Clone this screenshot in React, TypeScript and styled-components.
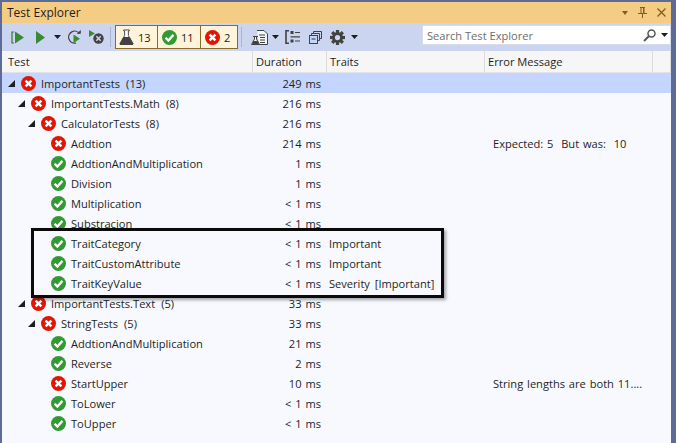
import React from "react";
import styled, { createGlobalStyle } from "styled-components";

type Status = "pass" | "fail";

interface TestRow {
  name: string;
  count?: number;
  level: number;
  status: Status;
  group?: boolean;
  duration: string;
  traits?: string;
  error?: string;
  selected?: boolean;
}

const rows: TestRow[] = [
  { name: "ImportantTests", count: 13, level: 0, status: "fail", group: true, duration: "249 ms", selected: true },
  { name: "ImportantTests.Math", count: 8, level: 1, status: "fail", group: true, duration: "216 ms" },
  { name: "CalculatorTests", count: 8, level: 2, status: "fail", group: true, duration: "216 ms" },
  { name: "Addtion", level: 3, status: "fail", duration: "214 ms", error: "Expected: 5  But was:  10" },
  { name: "AddtionAndMultiplication", level: 3, status: "pass", duration: "1 ms" },
  { name: "Division", level: 3, status: "pass", duration: "1 ms" },
  { name: "Multiplication", level: 3, status: "pass", duration: "< 1 ms" },
  { name: "Substracion", level: 3, status: "pass", duration: "< 1 ms" },
  { name: "TraitCategory", level: 3, status: "pass", duration: "< 1 ms", traits: "Important" },
  { name: "TraitCustomAttribute", level: 3, status: "pass", duration: "< 1 ms", traits: "Important" },
  { name: "TraitKeyValue", level: 3, status: "pass", duration: "< 1 ms", traits: "Severity [Important]" },
  { name: "ImportantTests.Text", count: 5, level: 1, status: "fail", group: true, duration: "33 ms" },
  { name: "StringTests", count: 5, level: 2, status: "fail", group: true, duration: "33 ms" },
  { name: "AddtionAndMultiplication", level: 3, status: "pass", duration: "21 ms" },
  { name: "Reverse", level: 3, status: "pass", duration: "2 ms" },
  { name: "StartUpper", level: 3, status: "fail", duration: "10 ms", error: "String lengths are both 11...." },
  { name: "ToLower", level: 3, status: "pass", duration: "< 1 ms" },
  { name: "ToUpper", level: 3, status: "pass", duration: "< 1 ms" },
];

const FailIcon = ({ size = 15 }: { size?: number }) => (
  <svg width={size} height={size} viewBox="0 0 16 16">
    <circle cx="8" cy="8" r="8" fill="#e51400" />
    <path d="M4.9 4.9l6.2 6.2M11.1 4.9l-6.2 6.2" stroke="#fff" strokeWidth="2.6" />
  </svg>
);

const PassIcon = ({ size = 15 }: { size?: number }) => (
  <svg width={size} height={size} viewBox="0 0 16 16">
    <circle cx="8" cy="8" r="8" fill="#339933" />
    <path d="M3.8 8.2l3 3 5.4-6" fill="none" stroke="#fff" strokeWidth="2.4" />
  </svg>
);

const FlaskIcon = () => (
  <FlaskSvg width="15" height="16" viewBox="0 0 16 17">
    <path d="M5 1h6v1h-1v5l5 8.500v.500H1v-.500L6 7V2H5z" fill="#fff" stroke="#424242" strokeWidth="1" />
    <path d="M4.600 8.500h6.800L15 15.600V17H1v-1.400z" fill="#424242" />
  </FlaskSvg>
);

const Caret = () => (
  <svg width="7" height="4" viewBox="0 0 7 4">
    <path d="M0 0h7L3.500 4z" fill="#1e1e1e" />
  </svg>
);

const Expander = () => (
  <svg width="7" height="7" viewBox="0 0 7 7">
    <path d="M7 0v7H0z" fill="#1e1e1e" />
  </svg>
);

const RunAllIcon = () => (
  <svg width="13" height="13" viewBox="0 0 13 13">
    <path d="M3 1H1v11h2" fill="none" stroke="#2f7d32" strokeWidth="1.200" />
    <path d="M4 .500l9 6-9 6z" fill="#388a34" />
  </svg>
);

const RunIcon = () => (
  <svg width="9" height="13" viewBox="0 0 9 13">
    <path d="M0 0l9 6.500L0 13z" fill="#388a34" />
  </svg>
);

const RepeatIcon = () => (
  <svg width="15" height="14" viewBox="0 0 15 14">
    <path d="M12.500 3.600A6 6 0 1 0 9 13" fill="none" stroke="#424242" strokeWidth="1.200" />
    <path d="M9.500 3.800h4.300V0z" fill="#424242" />
    <path d="M6.500 4.500l6.500 4.200-6.500 4.300z" fill="#388a34" />
  </svg>
);

const CancelIcon = () => (
  <svg width="15" height="14" viewBox="0 0 15 14">
    <path d="M0 0l6 3.500L0 7z" fill="#388a34" />
    <circle cx="9.500" cy="8.500" r="5.200" fill="#424242" />
    <path d="M7.300 6.300l4.400 4.400M11.700 6.300l-4.400 4.400" stroke="#ccd5f0" strokeWidth="1.500" />
  </svg>
);

const PlaylistIcon = () => (
  <svg width="17" height="15" viewBox="0 0 17 15">
    <path d="M6 .500h7l3.500 3.500v10.500H8" fill="#f4f5fa" stroke="#424242" />
    <path d="M8 5h6M9 7.500h5M9 10h5M9 12.500h5" stroke="#424242" />
    <path d="M2 6.500h5M3.500 6.500v2.500L.500 14.500h8L5.500 9V6.500" fill="#f4f5fa" stroke="#424242" />
    <path d="M2.300 11h4.400l1.400 3.500h-7z" fill="#424242" />
  </svg>
);

const HierarchyIcon = () => (
  <svg width="15" height="14" viewBox="0 0 15 14">
    <path d="M4 .800H1v12.400h3" fill="none" stroke="#424242" strokeWidth="1.600" />
    <path d="M5.500 1h3v3h-3zM5.500 9.500h3v3h-3z" fill="#424242" />
    <path d="M10 2.500h5M10 11h5M5.500 6.800H15" stroke="#424242" strokeWidth="1.200" />
  </svg>
);

const CopyIcon = () => (
  <svg width="13" height="13" viewBox="0 0 13 13">
    <path d="M4.500 2.500v-2h8v7h-2" fill="none" stroke="#424242" />
    <path d="M2.500 4.500v-2h8v7h-2" fill="none" stroke="#424242" />
    <rect x=".500" y="4.500" width="8" height="8" fill="#ccd5f0" stroke="#424242" />
    <path d="M2.500 8h4" stroke="#1c6fb8" strokeWidth="1.400" />
  </svg>
);

const gearTeeth = [0, 45, 90, 135, 180, 225, 270, 315];

const GearIcon = () => (
  <svg width="15" height="15" viewBox="0 0 16 16">
    <circle cx="8" cy="8" r="4.300" fill="none" stroke="#424242" strokeWidth="3" />
    {gearTeeth.map((angle) => (
      <rect key={angle} x="6.300" y="0" width="3.400" height="3.500" fill="#424242" transform={`rotate(${angle} 8 8)`} />
    ))}
  </svg>
);

const SearchIcon = () => (
  <svg width="13" height="13" viewBox="0 0 13 13">
    <circle cx="8.500" cy="4.500" r="3.500" fill="none" stroke="#555" strokeWidth="1.500" />
    <path d="M6 7l-5 5" stroke="#555" strokeWidth="2" />
  </svg>
);

const PinIcon = () => (
  <svg width="9" height="11" viewBox="0 0 9 11">
    <path d="M2 .500h5M3 .500v6M6 .500v6M0 6.500h9M4.500 6.500V11" stroke="#7a5f24" fill="none" />
    <path d="M5 1h1v5H5z" fill="#7a5f24" />
  </svg>
);

const CloseIcon = () => (
  <svg width="9" height="9" viewBox="0 0 9 9">
    <path d="M.500.500l8 8M8.500.500l-8 8" stroke="#7a5f24" strokeWidth="1.300" />
  </svg>
);

export default function App() {
  return (
    <>
      <GlobalStyle />
      <Window>
        <TitleBar>
          <TitleText>Test Explorer</TitleText>
          <TitleActions>
            <TitleCaret />
            <PinIcon />
            <CloseIcon />
          </TitleActions>
        </TitleBar>
        <Toolbar>
          <ToolSlot $gap={1}><RunAllIcon /></ToolSlot>
          <ToolSlot $gap={12}><RunIcon /></ToolSlot>
          <ToolSlot $gap={9}><Caret /></ToolSlot>
          <ToolSlot $gap={6}><RepeatIcon /></ToolSlot>
          <ToolSlot $gap={7}><CancelIcon /></ToolSlot>
          <Separator $before={6} />
          <FilterGroup>
            <FilterButton $width={43}><FlaskIcon /> 13</FilterButton>
            <FilterButton $width={44}><PassIcon /> 11</FilterButton>
            <FilterButton $width={38}><FailIcon /> 2</FilterButton>
          </FilterGroup>
          <Separator $before={4} />
          <ToolSlot $gap={5}><PlaylistIcon /></ToolSlot>
          <ToolSlot $gap={4}><Caret /></ToolSlot>
          <ToolSlot $gap={6}><HierarchyIcon /></ToolSlot>
          <ToolSlot $gap={9}><CopyIcon /></ToolSlot>
          <ToolSlot $gap={8}><GearIcon /></ToolSlot>
          <ToolSlot $gap={6}><Caret /></ToolSlot>
          <SearchBox>
            <SearchPlaceholder>Search Test Explorer</SearchPlaceholder>
            <SearchIcon />
            <Caret />
          </SearchBox>
        </Toolbar>
        <HeaderRow>
          <HeaderCell $first>Test</HeaderCell>
          <HeaderCell>Duration</HeaderCell>
          <HeaderCell>Traits</HeaderCell>
          <HeaderCell>Error Message</HeaderCell>
          <HeaderCell />
        </HeaderRow>
        <TreeBody>
          {rows.map((row, index) => (
            <Row key={index} $selected={row.selected}>
              <NameCell $level={row.level}>
                <ExpanderSlot>{row.group && <Expander />}</ExpanderSlot>
                {row.status === "fail" ? <FailIcon /> : <PassIcon />}
                <Name>{row.name}</Name>
                {row.count !== undefined && <Count>({row.count})</Count>}
              </NameCell>
              <DurationCell>{row.duration}</DurationCell>
              <TraitsCell>{row.traits}</TraitsCell>
              <ErrorCell>{row.error}</ErrorCell>
            </Row>
          ))}
          <Highlight />
        </TreeBody>
      </Window>
    </>
  );
}

const GlobalStyle = createGlobalStyle`
  html, body {
    margin: 0;
    padding: 0;
    background: #5d6b99;
  }
  body {
    font-family: "Open Sans", "Liberation Sans", sans-serif;
    font-size: 11.1px;
    color: #1e1e1e;
  }
`;

const Window = styled.div`
  width: 676px;
  height: 443px;
  box-sizing: border-box;
  padding: 2px 5px 0 2px;
  overflow: hidden;
  display: flex;
  flex-direction: column;
`;

const TitleBar = styled.div`
  height: 21px;
  flex: none;
  background: #f5cc84;
  display: flex;
  align-items: center;
  justify-content: space-between;
  padding: 0 5px 0 5px;
`;

const TitleText = styled.span`
  font-size: 12px;
  color: #1e1e1e;
`;

const TitleActions = styled.div`
  display: flex;
  align-items: center;
  gap: 10px;
`;

const TitleCaret = styled.span`
  width: 0;
  height: 0;
  border-left: 3.5px solid transparent;
  border-right: 3.5px solid transparent;
  border-top: 4px solid #7a5f24;
`;

const Toolbar = styled.div`
  height: 28px;
  flex: none;
  background: #ccd5f0;
  display: flex;
  align-items: center;
  padding-left: 8px;
  box-sizing: border-box;
`;

const ToolSlot = styled.span<{ $gap: number }>`
  display: flex;
  align-items: center;
  margin-left: ${({ $gap }) => $gap}px;
`;

const Separator = styled.span<{ $before: number }>`
  width: 1px;
  height: 20px;
  background: #a9b3d4;
  margin: 0 4px 0 ${({ $before }) => $before}px;
`;

const FilterGroup = styled.div`
  display: flex;
  height: 24px;
`;

const FilterButton = styled.div<{ $width: number }>`
  width: ${({ $width }) => $width}px;
  box-sizing: border-box;
  background: #fdf4d9;
  border: 1px solid #8a6a24;
  margin-right: -1px;
  display: flex;
  align-items: center;
  gap: 4px;
  padding-left: 4px;
`;

const FlaskSvg = styled.svg`
  margin-left: -1px;
`;

const SearchBox = styled.div`
  margin: 2px 0 0 auto;
  align-self: flex-start;
  width: 249px;
  height: 20px;
  box-sizing: border-box;
  background: #fff;
  border: 1px solid #d6dcee;
  display: flex;
  align-items: center;
  gap: 5px;
  padding: 0 2px 0 4px;
`;

const SearchPlaceholder = styled.span`
  flex: 1;
  color: #6d6d6d;
`;

const gridColumns = "251px 74px 158px 168px 1fr";

const HeaderRow = styled.div`
  height: 22px;
  flex: none;
  background: #f6f6f6;
  border-bottom: 1px solid #e2e2e6;
  box-sizing: border-box;
  display: grid;
  grid-template-columns: ${gridColumns};
`;

const HeaderCell = styled.div<{ $first?: boolean }>`
  border-right: 1px solid #dcdcdc;
  padding-left: ${({ $first }) => ($first ? 6 : 3)}px;
  display: flex;
  align-items: center;
`;

const TreeBody = styled.div`
  flex: 1;
  background: #f7f9fe;
  position: relative;
`;

const Row = styled.div<{ $selected?: boolean }>`
  height: 20px;
  display: grid;
  grid-template-columns: ${gridColumns};
  align-items: center;
  background: ${({ $selected }) => ($selected ? "#c4d5ff" : "transparent")};
`;

const NameCell = styled.div<{ $level: number }>`
  display: flex;
  align-items: center;
  padding-left: ${({ $level }) => 6 + $level * 10}px;
  white-space: nowrap;
`;

const ExpanderSlot = styled.span`
  width: 13px;
  height: 20px;
  flex: none;
  display: flex;
  align-items: center;
`;

const Name = styled.span`
  margin-left: 5px;
`;

const Count = styled.span`
  margin-left: 6px;
`;

const DurationCell = styled.div`
  text-align: right;
  padding-right: 6px;
  white-space: nowrap;
  word-spacing: 1px;
`;

const TraitsCell = styled.div`
  padding-left: 2px;
  white-space: nowrap;
  word-spacing: 2px;
`;

const ErrorCell = styled.div`
  padding-left: 8px;
  white-space: pre;
  word-spacing: 1px;
`;

const Highlight = styled.div`
  position: absolute;
  left: 29px;
  top: 155px;
  width: 413px;
  height: 70px;
  box-sizing: border-box;
  border: 3px solid #0a0a0a;
  box-shadow: 2px 2px 3px rgba(0, 0, 0, 0.35);
  pointer-events: none;
`;
